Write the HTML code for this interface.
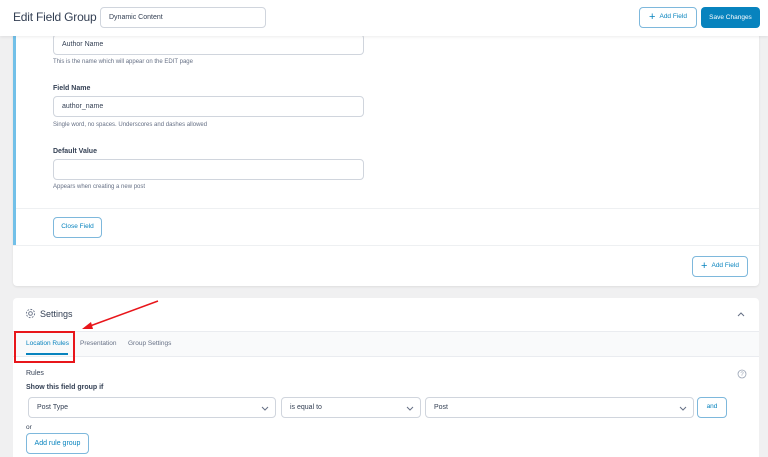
<!DOCTYPE html>
<html style="width:768px;height:457px;overflow:hidden"><head><meta charset="utf-8"><style>
*{box-sizing:border-box;margin:0;padding:0}
body{width:768px;height:457px;overflow:hidden;background:#f0f0f1;font-family:"Liberation Sans",sans-serif;position:relative;color:#344054}
.a{position:absolute}
.inp{position:absolute;background:#fff;border:1px solid #d0d5dd;border-radius:4px;font-size:7px;color:#344054;padding-left:8px;display:flex;align-items:center;line-height:1}
.lbl{position:absolute;font-size:7px;font-weight:bold;color:#344054}
.hint{position:absolute;font-size:6px;color:#667085}
.btn{position:absolute;border:1px solid #7eb8dc;border-radius:4px;background:#fff;color:#0783be;font-size:6.5px;display:flex;align-items:center;justify-content:center;line-height:1}
.sel svg{position:absolute;right:6px;top:8px}
</style></head><body>
<div class="a" style="left:0;top:0;width:768px;height:36px;background:#fff;box-shadow:0 1px 3px rgba(0,0,0,.08);z-index:2"></div>
<div class="a" style="left:13px;top:10px;font-size:12px;color:#344054;z-index:3;letter-spacing:-0.2px">Edit Field Group</div>
<div class="inp" style="left:100px;top:7px;width:166px;height:21px;z-index:3">Dynamic Content</div>
<div class="btn" style="left:639px;top:7px;width:58px;height:21px;z-index:3"><span style="font-size:11px;margin-right:4px">+</span>Add Field</div>
<div class="a" style="left:701px;top:7px;width:59px;height:21px;z-index:3;background:#0783be;border-radius:4px;color:#fff;font-size:6.5px;display:flex;align-items:center;justify-content:center">Save Changes</div>

<div class="a" style="left:13px;top:30px;width:746px;height:256px;background:#fff;border-radius:0 0 4px 4px;box-shadow:0 1px 2px rgba(0,0,0,.08)"></div>
<div class="a" style="left:13px;top:30px;width:3px;height:215px;background:#72c0e8"></div>
<div class="inp" style="left:53px;top:34px;width:311px;height:21px">Author Name</div>
<div class="hint" style="left:53px;top:59px">This is the name which will appear on the EDIT page</div>
<div class="lbl" style="left:53px;top:85px">Field Name</div>
<div class="inp" style="left:53px;top:96px;width:311px;height:21px">author_name</div>
<div class="hint" style="left:53px;top:122px">Single word, no spaces. Underscores and dashes allowed</div>
<div class="lbl" style="left:53px;top:148px">Default Value</div>
<div class="inp" style="left:53px;top:159px;width:311px;height:21px"></div>
<div class="hint" style="left:53px;top:184px">Appears when creating a new post</div>
<div class="a" style="left:16px;top:208px;width:743px;height:1px;background:#eef0f2"></div>
<div class="btn" style="left:53px;top:217px;width:49px;height:21px">Close Field</div>
<div class="a" style="left:13px;top:245px;width:746px;height:1px;background:#eef0f2"></div>
<div class="btn" style="left:692px;top:256px;width:56px;height:21px"><span style="font-size:11px;margin-right:4px">+</span>Add Field</div>

<div class="a" style="left:13px;top:298px;width:746px;height:159px;background:#fff;border-radius:4px 4px 0 0"></div>
<svg class="a" style="left:25px;top:308px" width="11" height="11" viewBox="0 0 12 12"><circle cx="6" cy="6" r="2" fill="none" stroke="#667085" stroke-width="1"/><circle cx="6" cy="6" r="4.5" fill="none" stroke="#667085" stroke-width="1" stroke-dasharray="2 1.5"/></svg>
<div class="a" style="left:40px;top:309px;font-size:9px;color:#344054">Settings</div>
<svg class="a" style="left:737px;top:311px" width="8" height="6"><path d="M1 5L4 2L7 5" fill="none" stroke="#667085" stroke-width="1"/></svg>
<div class="a" style="left:13px;top:331px;width:746px;height:26px;background:#f9fafb;border-top:1px solid #eaecf0;border-bottom:1px solid #eaecf0"></div>
<div class="a" style="left:26px;top:340px;font-size:6.5px;color:#0783be">Location Rules</div>
<div class="a" style="left:26px;top:353px;width:42px;height:2px;background:#0783be"></div>
<div class="a" style="left:80px;top:340px;font-size:6.5px;color:#667085">Presentation</div>
<div class="a" style="left:128px;top:340px;font-size:6.5px;color:#667085">Group Settings</div>
<div class="a" style="left:14px;top:331px;width:61px;height:32px;border:2px solid #e8161b"></div>
<svg class="a" style="left:0;top:0" width="768" height="457"><line x1="158" y1="301" x2="90" y2="326" stroke="#e8161b" stroke-width="1.5"/><path d="M82 329L91 322L93 329Z" fill="#e8161b"/></svg>
<div class="lbl" style="left:26px;top:370px;font-weight:normal">Rules</div>
<div class="lbl" style="left:26px;top:384px">Show this field group if</div>
<svg class="a" style="left:737px;top:369px" width="10" height="10"><circle cx="5" cy="5" r="4" fill="none" stroke="#98a2b3" stroke-width=".8"/><text x="5" y="7.2" font-size="6" text-anchor="middle" fill="#98a2b3" font-family="Liberation Sans">?</text></svg>
<div class="inp sel" style="left:28px;top:397px;width:248px;height:21px">Post Type<svg width="8" height="5"><path d="M1 1L4 4L7 1" fill="none" stroke="#667085"/></svg></div>
<div class="inp sel" style="left:281px;top:397px;width:140px;height:21px">is equal to<svg width="8" height="5"><path d="M1 1L4 4L7 1" fill="none" stroke="#667085"/></svg></div>
<div class="inp sel" style="left:425px;top:397px;width:269px;height:21px">Post<svg width="8" height="5"><path d="M1 1L4 4L7 1" fill="none" stroke="#667085"/></svg></div>
<div class="btn" style="left:697px;top:397px;width:30px;height:21px">and</div>
<div class="a" style="left:26px;top:424px;font-size:6.5px;color:#344054">or</div>
<div class="btn" style="left:26px;top:433px;width:63px;height:21px;font-size:7px">Add rule group</div>
</body></html>
